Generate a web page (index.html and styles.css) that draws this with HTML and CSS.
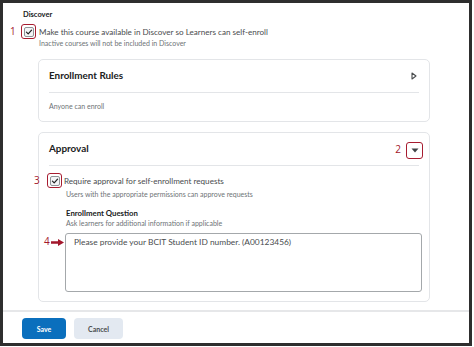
FILE: index.html
```html
<!DOCTYPE html>
<html>
<head>
<meta charset="utf-8">
<link rel="stylesheet" href="styles.css">
</head>
<body>
<div class="frame">
  <div class="content">
    <div class="label">Discover</div>
    <div class="check-row">
      <span class="hl">
        <span class="anno anno-1">1</span>
        <span class="cb"><svg viewBox="0 0 10 10" width="8" height="8"><path d="M1.8 5.2 L4 7.3 L8.2 2.6" fill="none" stroke="#202122" stroke-width="1.5" stroke-linecap="round" stroke-linejoin="round"/></svg></span>
      </span>
      <span class="cb-text">Make this course available in Discover so Learners can self-enroll</span>
    </div>
    <div class="help help-top">Inactive courses will not be included in Discover</div>

    <div class="card card-rules">
      <div class="card-head">
        <h2 class="card-title">Enrollment Rules</h2>
        <svg class="tri" viewBox="0 0 6 8" width="6" height="8"><path d="M1 1 L5 4 L1 7 Z" fill="none" stroke="#494c4e" stroke-width="1.1" stroke-linejoin="round"/></svg>
      </div>
      <div class="card-body rules-body">
        <div class="help">Anyone can enroll</div>
      </div>
    </div>

    <div class="card card-approval">
      <div class="card-head">
        <h2 class="card-title">Approval</h2>
        <span class="anno anno-2">2</span>
        <span class="dd"><svg viewBox="0 0 8 5" width="8" height="5"><path d="M0.5 0.5 L7.5 0.5 L4 4.5 Z" fill="#3f4346"/></svg></span>
      </div>
      <div class="card-body approval-body">
        <div class="check-row">
          <span class="hl">
            <span class="anno anno-3">3</span>
            <span class="cb"><svg viewBox="0 0 10 10" width="8" height="8"><path d="M1.8 5.2 L4 7.3 L8.2 2.6" fill="none" stroke="#202122" stroke-width="1.5" stroke-linecap="round" stroke-linejoin="round"/></svg></span>
          </span>
          <span class="cb-text">Require approval for self-enrollment requests</span>
        </div>
        <div class="help help-sub">Users with the appropriate permissions can approve requests</div>
        <div class="question">
          <div class="q-label">Enrollment Question</div>
          <div class="help">Ask learners for additional information if applicable</div>
          <div class="ta">
            <span class="anno anno-4">4</span>
            <svg class="arrow" viewBox="0 0 13 7" width="13" height="7"><path d="M0 2.2 H7 V0 L13 3.5 L7 7 V4.8 H0 Z" fill="#a3172c"/></svg>
            Please provide your BCIT Student ID number. (A00123456)
          </div>
        </div>
      </div>
    </div>
  </div>
  <div class="footer">
    <button class="btn btn-primary">Save</button>
    <button class="btn btn-secondary">Cancel</button>
  </div>
</div>
</body>
</html>
```

FILE: styles.css
```css
* { box-sizing: border-box; }
html, body { margin: 0; padding: 0; background: #fff; }
body {
  font-family: Lato, "Open Sans", sans-serif;
  color: #494c4e;
  width: 474px;
  height: 347px;
  overflow: hidden;
}
.frame {
  width: 472px;
  height: 346px;
  border: 3px solid #2e2e2e;
  background: #fff;
  display: flex;
  flex-direction: column;
}
.content {
  padding: 7px 0 0 20px;
  flex: none;
}
.label {
  font-size: 7.5px;
  font-weight: 700;
  line-height: 10px;
  color: #202122;
}
.check-row {
  display: flex;
  align-items: center;
  height: 15px;
  margin-top: 4px;
}
.hl {
  position: relative;
  width: 15px;
  height: 15px;
  margin-left: -2px;
  border: 1.6px solid #a71c30;
  border-radius: 3px;
  display: flex;
  align-items: center;
  justify-content: center;
  flex: none;
}
.cb {
  width: 10px;
  height: 10px;
  border: 1px solid #8f9497;
  border-radius: 2px;
  background: #f3f5f7;
  display: flex;
  align-items: center;
  justify-content: center;
}
.cb svg { display: block; }
.cb-text {
  margin-left: 3px;
  font-size: 8.1px;
  line-height: 10px;
  color: #494c4e;
  white-space: nowrap;
}
.anno {
  position: absolute;
  color: #a3172c;
  font-family: "Open Sans", Lato, sans-serif;
  font-size: 10px;
  line-height: 12px;
}
.anno-1 { left: -12px; top: 0px; }
.anno-3 { left: -14px; top: 0px; }
.help {
  font-size: 7px;
  line-height: 8px;
  color: #6e7376;
  white-space: nowrap;
}
.help-top { margin-left: 16px; }
.card {
  margin-left: 15px;
  width: 392px;
  border: 1px solid #e3e5e8;
  border-radius: 5px;
  padding: 0 10px;
  background: #fff;
}
.card-rules { margin-top: 12px; }
.card-approval { margin-top: 10px; }
.card-head {
  display: flex;
  align-items: center;
  height: 33px;
  border-bottom: 1px solid #e3e5e8;
  position: relative;
}
.card-title {
  margin: 0 0 3px 0;
  font-size: 9.9px;
  line-height: 14px;
  font-weight: 700;
  color: #202122;
  flex: 1;
}
.tri { margin-right: 2px; margin-bottom: 1px; }
.rules-body {
  padding: 9px 0 11px;
}
.anno-2 {
  position: static;
  margin-right: 5px;
}
.dd {
  width: 17px;
  height: 17px;
  margin-right: -4px;
  margin-top: 2px;
  border: 1.6px solid #a71c30;
  border-radius: 3px;
  display: flex;
  align-items: center;
  justify-content: center;
}
.dd svg { display: block; margin-top: 1px; }
.approval-body {
  padding: 7px 0 9px;
}
.approval-body .check-row { margin-top: 0; }
.approval-body .cb-text { margin-left: 2px; }
.help-sub { margin-left: 17px; margin-top: 2px; }
.question { margin-left: 17px; margin-top: 10px; }
.q-label {
  font-size: 7.8px;
  line-height: 10px;
  font-weight: 700;
  color: #202122;
  margin-bottom: 1px;
}
.ta {
  position: relative;
  margin-top: 6px;
  margin-left: -1px;
  width: 357px;
  height: 59px;
  border: 1px solid #a4a8ab;
  border-radius: 3px;
  padding: 3px 8px;
  font-size: 8.4px;
  line-height: 10px;
  color: #494c4e;
  white-space: nowrap;
}
.anno-4 { left: -22px; top: 1px; }
.arrow { position: absolute; left: -15px; top: 5px; }
.footer {
  margin-top: 8px;
  border-top: 2px solid #e6e7e9;
  padding: 6px 0 0 19px;
  display: flex;
  gap: 8px;
}
.btn {
  height: 21px;
  border: none;
  border-radius: 4px;
  font-family: Lato, sans-serif;
  font-size: 7px;
  font-weight: 700;
  padding: 0;
}
.btn-primary { width: 44px; background: #0a6fbd; color: #fff; }
.btn-secondary { width: 49px; background: #e3e9f1; color: #494c4e; }
```
